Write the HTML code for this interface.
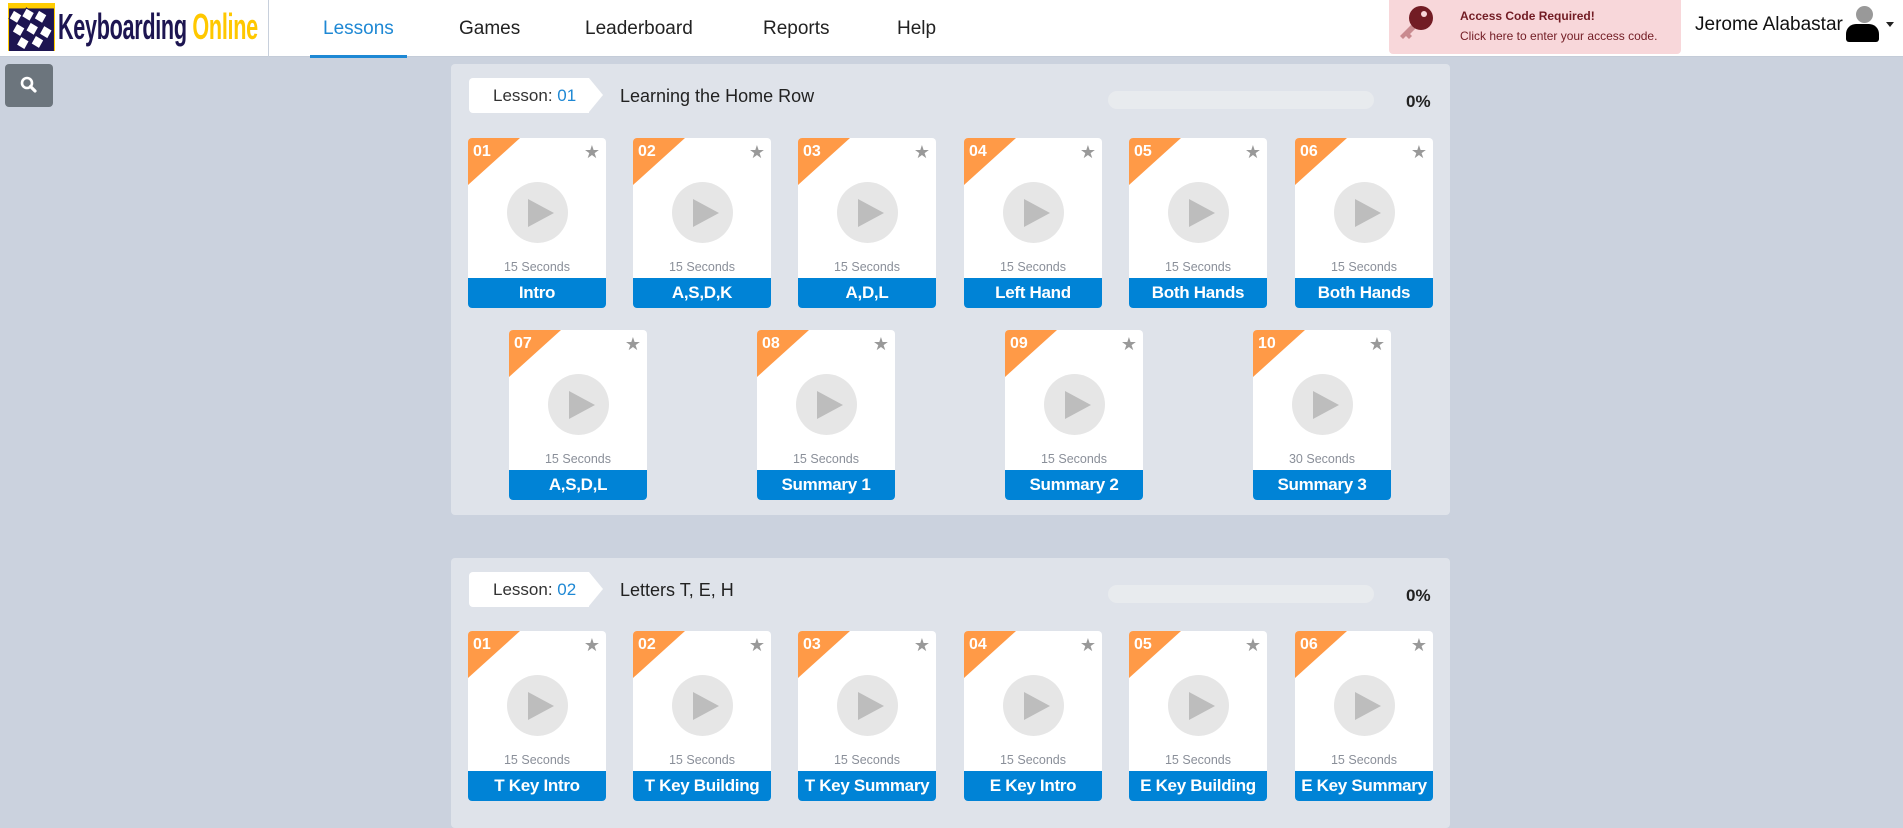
<!DOCTYPE html>
<html><head><meta charset="utf-8">
<style>
*{box-sizing:border-box;margin:0;padding:0}
body{width:1903px;height:817px;overflow:hidden;background:#cbd2de;font-family:"Liberation Sans",sans-serif;position:relative}
.hdr{position:absolute;left:0;top:0;width:1903px;height:57px;background:#fff;border-bottom:1px solid #c4ccd8}
.nav{position:absolute;top:18px;font-size:19px;color:#222}
.panel{position:absolute;left:451px;width:999px;background:#dfe3ea;border-radius:4px}
.lbl{position:absolute;left:18px;width:120px;height:35px;background:#fff;border-radius:4px 0 0 4px;font-size:17px;color:#333;line-height:35px;padding-left:24px}
.lbl:after{content:"";position:absolute;right:-14px;top:0;border-left:14px solid #fff;border-top:17.5px solid transparent;border-bottom:17.5px solid transparent}
.lbl b{font-weight:normal;color:#1e88d4}
.ttl{position:absolute;left:169px;font-size:18px;color:#222}
.prog{position:absolute;left:657px;width:266px;height:18px;background:#e8ebee;border-radius:9px}
.pct{position:absolute;left:955px;font-size:17px;font-weight:bold;color:#222}
.card{position:absolute;width:138px;height:170px;background:#fff;border-radius:4px;overflow:hidden}
.card .tri{position:absolute;left:0;top:0;border-top:47px solid #ff9a47;border-right:52px solid transparent}
.card .num{position:absolute;left:5px;top:5px;color:#fff;font-weight:bold;font-size:16px}
.card .star{position:absolute;right:6px;top:4px;color:#999;font-size:18px}
.card .play{position:absolute;left:39px;top:44px;width:61px;height:61px;border-radius:50%;background:#e6e6e6}
.card .play:after{content:"";position:absolute;left:21px;top:17px;border-left:26px solid #bdbdbd;border-top:14px solid transparent;border-bottom:14px solid transparent}
.card .sec{position:absolute;left:0;width:100%;top:122px;text-align:center;font-size:12.5px;color:#8a8f99}
.card .bar{position:absolute;left:0;bottom:0;width:100%;height:30px;background:#0083d6;color:#fff;font-weight:bold;font-size:17px;text-align:center;line-height:30px;letter-spacing:-0.3px}
</style></head><body>
<div class="hdr">
 <svg style="position:absolute;left:8px;top:3px" width="47" height="48" viewBox="0 0 45 44" preserveAspectRatio="none">
  <rect width="45" height="44" fill="#ffcc00"/>
  <rect x="1" y="5" width="43" height="39" fill="#1d1551"/>
  <g fill="#fff" stroke="#1d1551" stroke-width="1">
   <rect x="3" y="8" width="9" height="9" transform="rotate(30 7 12)"/><rect x="15" y="6" width="9" height="9" transform="rotate(30 19 10)"/><rect x="27" y="8" width="9" height="9" transform="rotate(30 31 12)"/>
   <rect x="6" y="20" width="9" height="9" transform="rotate(30 10 24)"/><rect x="19" y="19" width="9" height="9" transform="rotate(30 23 23)"/><rect x="32" y="22" width="9" height="9" transform="rotate(30 36 26)"/>
   <rect x="10" y="32" width="9" height="9" transform="rotate(30 14 36)"/><rect x="24" y="31" width="9" height="9" transform="rotate(30 28 35)"/>
  </g>
 </svg>
 <div style="position:absolute;left:58px;top:6px;font-size:36px;font-weight:bold;color:#1d1551;transform:scaleX(0.6);transform-origin:0 0;white-space:nowrap;letter-spacing:-0.5px">Keyboarding <span style="color:#ffc800">Online</span></div>
 <div style="position:absolute;left:268px;top:0;width:1px;height:57px;background:#c8d0dc"></div>
 <div class="nav" style="left:323px;color:#1e88d4">Lessons</div>
 <div style="position:absolute;left:310px;top:55px;width:97px;height:3px;background:#1e88d4"></div>
 <div class="nav" style="left:459px">Games</div>
 <div class="nav" style="left:585px">Leaderboard</div>
 <div class="nav" style="left:763px">Reports</div>
 <div class="nav" style="left:897px">Help</div>
 <div style="position:absolute;left:1389px;top:0;width:292px;height:54px;background:#f8d7da;border-radius:0 0 4px 4px">
  <svg style="position:absolute;left:8px;top:3px" width="40" height="44" viewBox="0 0 40 44">
   <path d="M14 22 L3 33 L6 36 L9 33 L12 36 L15 33 L13 31 L19 25 Z" fill="#c98a8f"/>
   <circle cx="24" cy="15" r="12" fill="#721c24"/><circle cx="27" cy="11" r="3" fill="#f8d7da"/>
  </svg>
  <div style="position:absolute;left:71px;top:9px;font-size:12px;font-weight:bold;color:#721c24">Access Code Required!</div>
  <div style="position:absolute;left:71px;top:29px;font-size:12px;color:#721c24">Click here to enter your access code.</div>
 </div>
 <div style="position:absolute;left:1695px;top:14px;font-size:19px;color:#111">Jerome Alabastar</div>
 <div style="position:absolute;left:1856px;top:6px;width:17px;height:17px;border-radius:50%;background:#999"></div>
 <div style="position:absolute;left:1846px;top:24px;width:33px;height:18px;border-radius:10px 10px 3px 3px;background:#000"></div>
 <div style="position:absolute;left:1886px;top:22px;border-top:5px solid #222;border-left:4px solid transparent;border-right:4px solid transparent"></div>
</div>
<div style="position:absolute;left:5px;top:64px;width:48px;height:43px;background:#6c757d;border-radius:4px">
 <svg style="position:absolute;left:15px;top:12px" width="18" height="18" viewBox="0 0 18 18"><circle cx="7" cy="7" r="5" fill="none" stroke="#fff" stroke-width="2.6"/><path d="M10.5 10.5 L15 15" stroke="#fff" stroke-width="3.2" stroke-linecap="round"/></svg>
</div>

<div class="panel" style="top:64px;height:451px">
 <div class="lbl" style="top:14px">Lesson: <b>01</b></div>
 <div class="ttl" style="top:22px">Learning the Home Row</div>
 <div class="prog" style="top:27px"></div>
 <div class="pct" style="top:28px">0%</div>
</div>
<div class="panel" style="top:558px;height:270px">
 <div class="lbl" style="top:14px">Lesson: <b>02</b></div>
 <div class="ttl" style="top:22px">Letters T, E, H</div>
 <div class="prog" style="top:27px"></div>
 <div class="pct" style="top:28px">0%</div>
</div>

<div class="card" style="left:468px;top:138px"><div class="tri"></div><div class="num">01</div><div class="star">★</div><div class="play"></div><div class="sec">15 Seconds</div><div class="bar">Intro</div></div>
<div class="card" style="left:633px;top:138px"><div class="tri"></div><div class="num">02</div><div class="star">★</div><div class="play"></div><div class="sec">15 Seconds</div><div class="bar">A,S,D,K</div></div>
<div class="card" style="left:798px;top:138px"><div class="tri"></div><div class="num">03</div><div class="star">★</div><div class="play"></div><div class="sec">15 Seconds</div><div class="bar">A,D,L</div></div>
<div class="card" style="left:964px;top:138px"><div class="tri"></div><div class="num">04</div><div class="star">★</div><div class="play"></div><div class="sec">15 Seconds</div><div class="bar">Left Hand</div></div>
<div class="card" style="left:1129px;top:138px"><div class="tri"></div><div class="num">05</div><div class="star">★</div><div class="play"></div><div class="sec">15 Seconds</div><div class="bar">Both Hands</div></div>
<div class="card" style="left:1295px;top:138px"><div class="tri"></div><div class="num">06</div><div class="star">★</div><div class="play"></div><div class="sec">15 Seconds</div><div class="bar">Both Hands</div></div>

<div class="card" style="left:509px;top:330px"><div class="tri"></div><div class="num">07</div><div class="star">★</div><div class="play"></div><div class="sec">15 Seconds</div><div class="bar">A,S,D,L</div></div>
<div class="card" style="left:757px;top:330px"><div class="tri"></div><div class="num">08</div><div class="star">★</div><div class="play"></div><div class="sec">15 Seconds</div><div class="bar">Summary 1</div></div>
<div class="card" style="left:1005px;top:330px"><div class="tri"></div><div class="num">09</div><div class="star">★</div><div class="play"></div><div class="sec">15 Seconds</div><div class="bar">Summary 2</div></div>
<div class="card" style="left:1253px;top:330px"><div class="tri"></div><div class="num">10</div><div class="star">★</div><div class="play"></div><div class="sec">30 Seconds</div><div class="bar">Summary 3</div></div>

<div class="card" style="left:468px;top:631px"><div class="tri"></div><div class="num">01</div><div class="star">★</div><div class="play"></div><div class="sec">15 Seconds</div><div class="bar">T Key Intro</div></div>
<div class="card" style="left:633px;top:631px"><div class="tri"></div><div class="num">02</div><div class="star">★</div><div class="play"></div><div class="sec">15 Seconds</div><div class="bar">T Key Building</div></div>
<div class="card" style="left:798px;top:631px"><div class="tri"></div><div class="num">03</div><div class="star">★</div><div class="play"></div><div class="sec">15 Seconds</div><div class="bar">T Key Summary</div></div>
<div class="card" style="left:964px;top:631px"><div class="tri"></div><div class="num">04</div><div class="star">★</div><div class="play"></div><div class="sec">15 Seconds</div><div class="bar">E Key Intro</div></div>
<div class="card" style="left:1129px;top:631px"><div class="tri"></div><div class="num">05</div><div class="star">★</div><div class="play"></div><div class="sec">15 Seconds</div><div class="bar">E Key Building</div></div>
<div class="card" style="left:1295px;top:631px"><div class="tri"></div><div class="num">06</div><div class="star">★</div><div class="play"></div><div class="sec">15 Seconds</div><div class="bar">E Key Summary</div></div>
</body></html>
